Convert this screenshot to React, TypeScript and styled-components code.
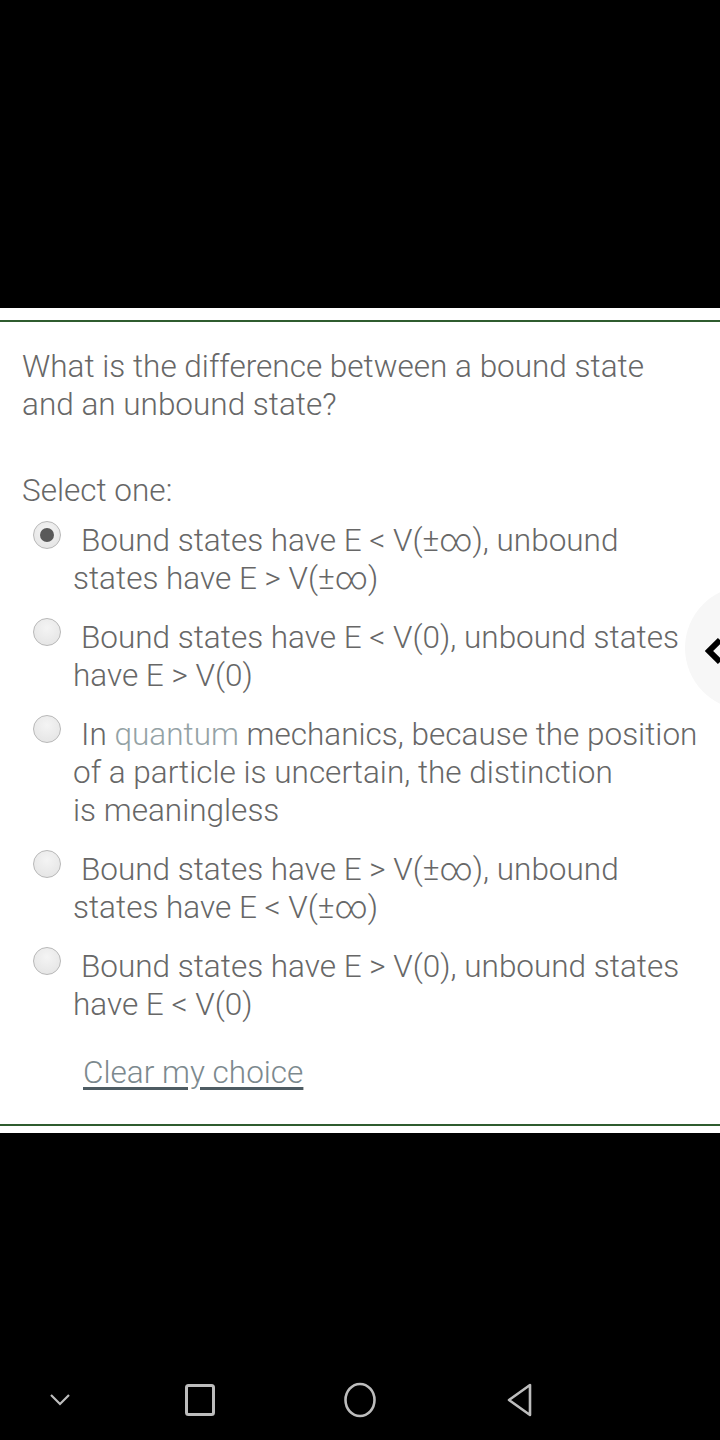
import React from "react";
import styled, { createGlobalStyle } from "styled-components";

const Global = createGlobalStyle`
  html, body { margin: 0; padding: 0; background: #000; }
  body { font-family: "Roboto Light", Roboto, "Noto Sans", sans-serif; }
`;

const Page = styled.div`
  width: 720px;
  height: 1440px;
  display: flex;
  flex-direction: column;
  background: #000;
  position: relative;
  overflow: hidden;
`;

const TopBlack = styled.div`
  height: 308px;
  flex: none;
  background: #000;
`;

const Sheet = styled.div`
  background: #fff;
  padding-top: 12px;
  padding-bottom: 7px;
  flex: none;
`;

const Card = styled.div`
  border-top: 2px solid #2f5c2f;
  border-bottom: 2px solid #2f5c2f;
  padding: 26px 0 32px 22px;
  color: #676767;
  font-weight: 300;
  font-size: 31.5px;
  line-height: 38px;
`;

const Question = styled.div`
  margin: 0 0 48px;
`;

const Prompt = styled.div`
  margin-bottom: 12px;
`;

const Options = styled.div`
  display: flex;
  flex-direction: column;
  gap: 21px;
`;

const Option = styled.div`
  display: flex;
  align-items: flex-start;
  gap: 12px;
  padding-left: 11px;
`;

const Radio = styled.span<{ $checked?: boolean }>`
  flex: none;
  width: 28px;
  height: 28px;
  margin-top: -1px;
  border-radius: 50%;
  box-sizing: border-box;
  border: 1.5px solid #b8b8b8;
  background: radial-gradient(circle at 50% 35%, #f4f4f4 0%, #e2e2e2 100%);
  display: flex;
  align-items: center;
  justify-content: center;
  &::after {
    content: "";
    display: ${(p) => (p.$checked ? "block" : "none")};
    width: 14px;
    height: 14px;
    border-radius: 50%;
    background: #595959;
  }
`;

const Label = styled.div`
  text-indent: 8px;
  white-space: nowrap;
`;

const Gloss = styled.span`
  color: #94a2a5;
`;

const ClearRow = styled.div`
  margin-top: 30px;
  padding-left: 61px;
`;

const ClearLink = styled.span`
  color: #7c898e;
  text-decoration: underline;
  text-decoration-color: #4e5c63;
  text-decoration-thickness: 3px;
  text-underline-offset: 4px;
`;

const SideButton = styled.div`
  position: absolute;
  left: 685px;
  top: 586px;
  width: 124px;
  height: 124px;
  border-radius: 50%;
  background: #f7f7f7;
`;

const SideChevron = styled.svg`
  position: absolute;
  left: 705px;
  top: 637px;
`;

const Spacer = styled.div`
  flex: 1;
`;

const NavBar = styled.div`
  height: 80px;
  display: grid;
  grid-template-columns: 120px 160px 160px 160px;
  align-items: center;
  justify-items: center;
`;

const NavIcon = styled.svg`
  display: block;
`;

const options: { text: React.ReactNode; checked?: boolean }[] = [
  {
    checked: true,
    text: (
      <>
        Bound states have E &lt; V(±∞), unbound
        <br />
        states have E &gt; V(±∞)
      </>
    ),
  },
  {
    text: (
      <>
        Bound states have E &lt; V(0), unbound states
        <br />
        have E &gt; V(0)
      </>
    ),
  },
  {
    text: (
      <>
        In <Gloss>quantum</Gloss> mechanics, because the position
        <br />
        of a particle is uncertain, the distinction
        <br />
        is meaningless
      </>
    ),
  },
  {
    text: (
      <>
        Bound states have E &gt; V(±∞), unbound
        <br />
        states have E &lt; V(±∞)
      </>
    ),
  },
  {
    text: (
      <>
        Bound states have E &gt; V(0), unbound states
        <br />
        have E &lt; V(0)
      </>
    ),
  },
];

export default function App() {
  return (
    <Page>
      <Global />
      <TopBlack />
      <Sheet>
        <Card>
          <Question>
            What is the difference between a bound state
            <br />
            and an unbound state?
          </Question>
          <Prompt>Select one:</Prompt>
          <Options>
            {options.map((o, i) => (
              <Option key={i}>
                <Radio $checked={o.checked} />
                <Label>{o.text}</Label>
              </Option>
            ))}
          </Options>
          <ClearRow>
            <ClearLink>Clear my choice</ClearLink>
          </ClearRow>
        </Card>
      </Sheet>
      <Spacer />
      <NavBar>
        <NavIcon width="24" height="16" viewBox="0 0 24 16">
          <path d="M3 3 L12 12 L21 3" fill="none" stroke="#bdbdbd" strokeWidth="2.2" />
        </NavIcon>
        <NavIcon width="32" height="34" viewBox="0 0 32 34">
          <rect x="2.5" y="2.5" width="27" height="29" rx="2" fill="none" stroke="#bdbdbd" strokeWidth="3" />
        </NavIcon>
        <NavIcon width="34" height="36" viewBox="0 0 34 36">
          <ellipse cx="17" cy="18" rx="14.5" ry="16" fill="none" stroke="#bdbdbd" strokeWidth="2.6" />
        </NavIcon>
        <NavIcon width="32" height="36" viewBox="0 0 32 36">
          <path d="M26 3 L26 33 L5 18 Z" fill="none" stroke="#bdbdbd" strokeWidth="2.6" strokeLinejoin="round" />
        </NavIcon>
      </NavBar>
      <SideButton />
      <SideChevron width="16" height="28" viewBox="0 0 16 28">
        <path d="M15 3 L4 14 L15 25" fill="none" stroke="#000" strokeWidth="6" />
      </SideChevron>
    </Page>
  );
}
